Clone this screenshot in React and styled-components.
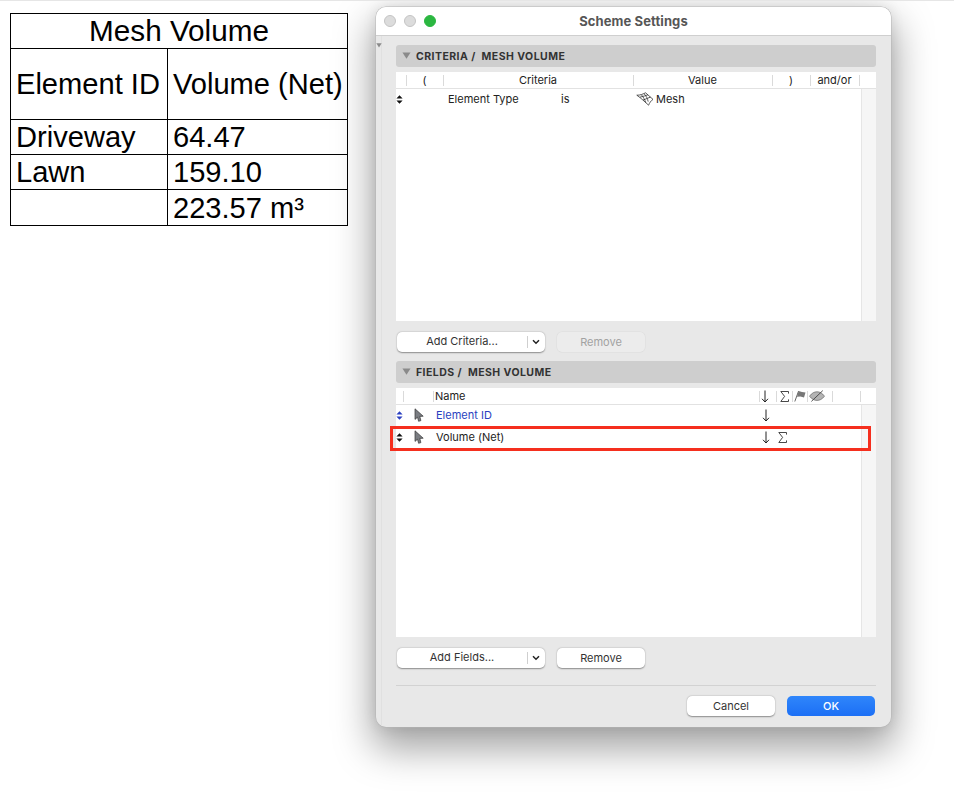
import React from 'react'
import styled, { createGlobalStyle } from 'styled-components'

const GlobalStyle = createGlobalStyle`
  html, body {
    margin: 0;
    padding: 0;
    background: #fff;
  }
`

const Page = styled.div`
  align-items: flex-start;
  background: #fff;
  border-top: 1px solid #e6e6e6;
  box-sizing: border-box;
  display: flex;
  height: 799px;
  overflow: hidden;
  width: 954px;
`

const Schedule = styled.table`
  border-collapse: collapse;
  color: #000;
  font-family: "Liberation Sans", Arial, sans-serif;
  font-size: 29.1px;
  margin: 11.5px 0 0 10px;
  table-layout: fixed;
  width: 338px;

  & td, & th {
    border: 1px solid #000;
    box-sizing: border-box;
    font-weight: 400;
    line-height: 31px;
    overflow: hidden;
    padding: 2px 0 0 5px;
    text-align: left;
    white-space: nowrap;
  }
  & col:first-child {
    width: 157px;
  }
`

const ScheduleTitle = styled.th`
  height: 35px;
  && {
    font-size: 29.7px;
    text-align: center;
    padding: 0;
  }
`

const ScheduleRow = styled.tr`
  height: ${ ({ $height }) => $height }px;
`

const Window = styled.div`
  background: #e8e8e8;
  border-radius: 10px;
  box-shadow: 0 0 0 0.5px #b5b5b5, 0 18px 38px 4px rgba(0, 0, 0, 0.36), 0 0 14px rgba(0, 0, 0, 0.1);
  color: #222;
  display: flex;
  flex-direction: column;
  font-family: Inter, "Liberation Sans", sans-serif;
  font-size: 11px;
  height: 720px;
  margin: 6px 0 0 28px;
  overflow: hidden;
  width: 515px;
`

const TitleBar = styled.div`
  align-items: center;
  background: #fff;
  border-bottom: 1px solid #cfcfcf;
  box-sizing: border-box;
  display: flex;
  flex: none;
  height: 29px;
  justify-content: center;
  position: relative;
`

const Lights = styled.div`
  display: flex;
  gap: 8px;
  left: 8px;
  position: absolute;
  top: 8px;
`

const Light = styled.span`
  background: ${ ({ $color }) => $color || '#dcdcdc' };
  border: 1px solid ${ ({ $color }) => $color || '#c4c4c4' };
  border-radius: 50%;
  box-sizing: border-box;
  height: 12px;
  width: 12px;
`

const Title = styled.div`
  color: #565656;
  font-size: 13px;
  font-weight: 700;
  letter-spacing: 0.1px;
`

const Body = styled.div`
  display: flex;
  flex: 1;
`

const Rail = styled.div`
  border-right: 1px solid #e0e0e0;
  flex: none;
  padding: 7px 0 0 0;
  width: 5px;
`

const Content = styled.div`
  display: flex;
  flex: 1;
  flex-direction: column;
  padding: 9px 15px 11px 14px;
`

const SectionHeader = styled.div`
  align-items: center;
  background: #cecece;
  border-radius: 3px;
  color: #333;
  display: flex;
  flex: none;
  font-size: 10.5px;
  font-weight: 700;
  gap: 5px;
  height: 22px;
  letter-spacing: 0.45px;
  margin-bottom: 5px;
  padding-left: 6px;
  white-space: pre;
`

const ListTable = styled.div`
  background: #fff;
  display: flex;
  flex: none;
  flex-direction: column;
  height: 249px;
  position: relative;
`

const HeaderRow = styled.div`
  border-bottom: 1px solid #e2e2e2;
  box-sizing: border-box;
  display: grid;
  flex: none;
  grid-template-columns: ${ ({ $columns }) => $columns };
  height: 17px;
`

const HeaderCell = styled.div`
  align-items: center;
  background: ${ ({ $plain }) => $plain ? 'none' : 'linear-gradient(#dadada, #dadada) left center / 1px 11px no-repeat' };
  display: flex;
  justify-content: ${ ({ $left }) => $left ? 'flex-start' : 'center' };
  padding-left: ${ ({ $left }) => $left ? '2px' : '0' };
`

const ListBody = styled.div`
  display: flex;
  flex: 1;
`

const Rows = styled.div`
  display: flex;
  flex: 1;
  flex-direction: column;
  margin-top: -1px;
`

const Scrollbar = styled.div`
  background: #f6f6f6;
  border-left: 1px solid #e6e6e6;
  flex: none;
  width: 14px;
`

const Row = styled.div`
  align-items: center;
  color: ${ ({ $color }) => $color || '#222' };
  display: grid;
  grid-template-columns: ${ ({ $columns }) => $columns };
  height: 22px;
`

const IconCell = styled.div`
  align-items: center;
  display: flex;
  gap: ${ ({ $gap }) => $gap || 0 }px;
`

const Highlight = styled.div`
  border: 3.5px solid #f52f1e;
  box-sizing: border-box;
  height: 25px;
  left: -6px;
  pointer-events: none;
  position: absolute;
  top: 38px;
  width: 481px;
`

const ButtonRow = styled.div`
  display: flex;
  flex: none;
  gap: 12px;
  margin: 11px 0 9px 1px;
`

const baseButton = `
  align-items: center;
  background: #fff;
  border-radius: 5px;
  box-shadow: 0 0.5px 1.5px rgba(0, 0, 0, 0.4);
  box-sizing: border-box;
  color: #333;
  display: flex;
  font-size: 11px;
  height: 20px;
  justify-content: center;
`

const SplitButton = styled.div`
  ${ baseButton }
  width: 148px;
`

const SplitLabel = styled.div`
  flex: 1;
  padding-bottom: 2px;
  text-align: center;
`

const SplitArrow = styled.div`
  align-items: center;
  background: linear-gradient(#cfcfcf, #cfcfcf) left center / 1px 12px no-repeat;
  display: flex;
  height: 100%;
  justify-content: center;
  padding-right: 1px;
  width: 17px;
`

const Button = styled.div`
  ${ baseButton }
  width: 88px;

  ${ ({ $disabled }) => $disabled && `
    background: #ececec;
    box-shadow: 0 0 0 0.5px #dcdcdc;
    color: #a2a2a2;
  ` }
  ${ ({ $primary }) => $primary && `
    background: linear-gradient(#2f86fb, #1c6ff5);
    box-shadow: none;
    color: #fff;
    font-weight: 500;
  ` }
`

const Footer = styled.div`
  border-top: 1px solid #d2d2d2;
  display: flex;
  flex: none;
  gap: 12px;
  justify-content: flex-end;
  margin-top: 8px;
  padding: 10px 1px 0 0;
`

const Triangle = ({ size = 9 }) => (
  <svg width={size} height={size * 0.8} viewBox="0 0 10 8" style={{ display: 'block' }}>
    <path d="M0.5 0.5H9.5L5 7.5Z" fill="#8a8a8a" />
  </svg>
)

const SortArrows = ({ color = '#111' }) => (
  <svg width="7" height="9" viewBox="0 0 7 9" style={{ display: 'block' }}>
    <path d="M3.5 0.3L6.6 3.6H0.4Z M3.5 8.7L0.4 5.4H6.6Z" fill={color} />
  </svg>
)

const Pointer = () => (
  <svg width="10" height="14" viewBox="0 0 10 14" style={{ display: 'block' }}>
    <path d="M1 0.8L9.2 8.2L5.8 8.4L6.9 12.6L4.6 13.3L3.5 9.2L1 11.4Z" fill="#7a7d82" stroke="#333" strokeWidth="0.7" strokeLinejoin="round" />
  </svg>
)

const MeshIcon = () => (
  <svg width="18" height="14" viewBox="0 0 18 14" style={{ display: 'block' }}>
    <path d="M0.8 3.2C4 3.4 7 2 9.6 0.8L17 7.4C15 8.6 13.4 11 12.6 13.2C9 10 5 6 0.8 3.2Z M3.8 5.2C6.8 4.8 9.6 3.4 12 2.8 M7 8C10 7.2 12.4 5.6 14.6 5.2 M5.4 2.8C7.2 5 9 7.8 9.8 10.8 M8 1.6C10 3.8 11.6 6.6 12.2 9.6" fill="none" stroke="#333" strokeWidth="0.8" />
  </svg>
)

const DownArrow = () => (
  <svg width="8" height="13" viewBox="0 0 8 13" style={{ display: 'block' }}>
    <path d="M4 0.5V12 M1 8.8L4 12L7 8.8" fill="none" stroke="#222" strokeWidth="1" />
  </svg>
)

const Sigma = () => (
  <svg width="9" height="11" viewBox="0 0 9 11" style={{ display: 'block' }}>
    <path d="M8.5 2.6V0.5H0.8L4.6 5.4L0.8 10.5H8.5V8.4" fill="none" stroke="#333" strokeWidth="0.9" />
  </svg>
)

const FlagIcon = () => (
  <svg width="12" height="12" viewBox="0 0 12 12" style={{ display: 'block' }}>
    <path d="M0.8 11.5L4.6 1" stroke="#666" strokeWidth="1" fill="none" />
    <path d="M4.6 1L8 2L11.5 2.4L10 7.4L6.4 6.6L3 6.8Z" fill="#777" />
  </svg>
)

const EyeOffIcon = () => (
  <svg width="16" height="12" viewBox="0 0 16 12" style={{ display: 'block' }}>
    <path d="M0.5 6.2C3 2.8 5.4 1.8 8 1.8C10.6 1.8 13 2.8 15.5 6.2C13 9.4 10.6 10.4 8 10.4C5.4 10.4 3 9.4 0.5 6.2Z" fill="#b4b4b4" stroke="#666" strokeWidth="0.7" />
    <path d="M2.4 11.4L13.8 0.6" stroke="#444" strokeWidth="0.9" />
  </svg>
)

const Chevron = () => (
  <svg width="8" height="6" viewBox="0 0 8 6" style={{ display: 'block' }}>
    <path d="M1 1.2L4 4.2L7 1.2" fill="none" stroke="#222" strokeWidth="1.5" />
  </svg>
)

const criteriaColumns = '10px 37px 190px 139px 38px 49px 17px'
const fieldsColumns = '7px 30px 326px 17px 16px 15px 25px 28px 16px'
const criteriaRow = '52px 113px 75px 1fr'
const fieldsRow = '18px 22px 326px 1fr'

const fields = [
  { name: 'Element ID', color: '#2a3fc0', sum: false },
  { name: 'Volume (Net)', sum: true },
]

export default function App() {
  return (
    <Page>
      <GlobalStyle />
      <Schedule>
        <colgroup><col /><col /></colgroup>
        <tbody>
          <ScheduleRow $height={35}><ScheduleTitle colSpan={2}>Mesh Volume</ScheduleTitle></ScheduleRow>
          <ScheduleRow $height={71}><td>Element ID</td><td>Volume (Net)</td></ScheduleRow>
          <ScheduleRow $height={35}><td>Driveway</td><td>64.47</td></ScheduleRow>
          <ScheduleRow $height={35}><td>Lawn</td><td>159.10</td></ScheduleRow>
          <ScheduleRow $height={36}><td></td><td>223.57 m³</td></ScheduleRow>
        </tbody>
      </Schedule>

      <Window>
        <TitleBar>
          <Lights>
            <Light />
            <Light />
            <Light $color="#2bb741" />
          </Lights>
          <Title>Scheme Settings</Title>
        </TitleBar>
        <Body>
          <Rail><Triangle size={6} /></Rail>
          <Content>
            <SectionHeader><Triangle />CRITERIA /  MESH VOLUME</SectionHeader>
            <ListTable>
              <HeaderRow $columns={criteriaColumns}>
                <HeaderCell $plain />
                <HeaderCell>(</HeaderCell>
                <HeaderCell>Criteria</HeaderCell>
                <HeaderCell>Value</HeaderCell>
                <HeaderCell>)</HeaderCell>
                <HeaderCell>and/or</HeaderCell>
                <HeaderCell />
              </HeaderRow>
              <ListBody>
                <Rows>
                  <Row $columns={criteriaRow}>
                    <IconCell><SortArrows /></IconCell>
                    <div>Element Type</div>
                    <div>is</div>
                    <IconCell $gap={2}><MeshIcon />Mesh</IconCell>
                  </Row>
                </Rows>
                <Scrollbar />
              </ListBody>
            </ListTable>
            <ButtonRow>
              <SplitButton>
                <SplitLabel>Add Criteria...</SplitLabel>
                <SplitArrow><Chevron /></SplitArrow>
              </SplitButton>
              <Button $disabled>Remove</Button>
            </ButtonRow>

            <SectionHeader><Triangle />FIELDS /  MESH VOLUME</SectionHeader>
            <ListTable>
              <HeaderRow $columns={fieldsColumns}>
                <HeaderCell $plain />
                <HeaderCell />
                <HeaderCell $left>Name</HeaderCell>
                <HeaderCell $left><DownArrow /></HeaderCell>
                <HeaderCell><Sigma /></HeaderCell>
                <HeaderCell><FlagIcon /></HeaderCell>
                <HeaderCell $left><EyeOffIcon /></HeaderCell>
                <HeaderCell />
                <HeaderCell />
              </HeaderRow>
              <ListBody>
                <Rows>
                  {fields.map((field) => (
                    <Row key={field.name} $columns={fieldsRow} $color={field.color}>
                      <IconCell><SortArrows color={field.color} /></IconCell>
                      <IconCell><Pointer /></IconCell>
                      <div>{field.name}</div>
                      <IconCell $gap={8}>
                        <DownArrow />
                        {field.sum && <Sigma />}
                      </IconCell>
                    </Row>
                  ))}
                </Rows>
                <Scrollbar />
              </ListBody>
              <Highlight />
            </ListTable>
            <ButtonRow>
              <SplitButton>
                <SplitLabel>Add Fields...</SplitLabel>
                <SplitArrow><Chevron /></SplitArrow>
              </SplitButton>
              <Button>Remove</Button>
            </ButtonRow>

            <Footer>
              <Button>Cancel</Button>
              <Button $primary>OK</Button>
            </Footer>
          </Content>
        </Body>
      </Window>
    </Page>
  )
}
